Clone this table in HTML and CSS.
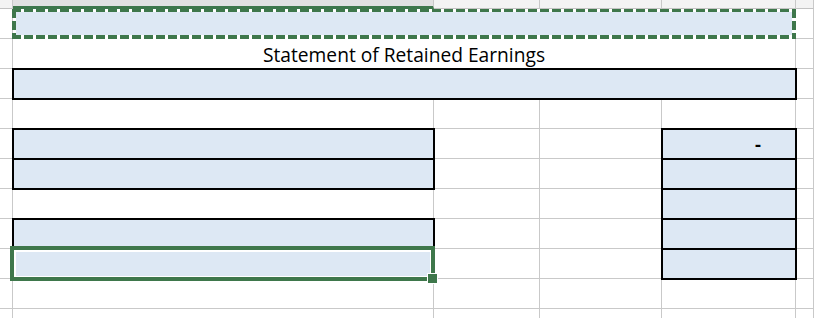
FILE: index.html
```html
<!DOCTYPE html>
<html>
<head>
<meta charset="utf-8">
<title>Statement of Retained Earnings</title>
<link rel="stylesheet" href="styles.css">
</head>
<body>
<div class="sheet">
  <!-- header row -->
  <div class="c h"></div><div class="c h sel"></div><div class="c h"></div><div class="c h"></div><div class="c h"></div><div class="c h"></div>
  <!-- row 1 -->
  <div class="c"></div><div class="marquee span4"></div><div class="c"></div>
  <!-- row 2 -->
  <div class="c"></div><div class="c span4 title">Statement of Retained Earnings</div><div class="c"></div>
  <!-- row 3 -->
  <div class="c"></div><div class="box span4"></div><div class="c"></div>
  <!-- row 4 -->
  <div class="c"></div><div class="c"></div><div class="c"></div><div class="c"></div><div class="c"></div><div class="c"></div>
  <!-- row 5 -->
  <div class="c"></div><div class="box"></div><div class="c"></div><div class="c"></div><div class="box val">-</div><div class="c"></div>
  <!-- row 6 -->
  <div class="c"></div><div class="box"></div><div class="c"></div><div class="c"></div><div class="box"></div><div class="c"></div>
  <!-- row 7 -->
  <div class="c"></div><div class="c"></div><div class="c"></div><div class="c"></div><div class="box"></div><div class="c"></div>
  <!-- row 8 -->
  <div class="c"></div><div class="box"></div><div class="c"></div><div class="c"></div><div class="box"></div><div class="c"></div>
  <!-- row 9 -->
  <div class="c"></div><div class="box active"><div class="sel-frame"><div class="handle"></div></div></div><div class="c"></div><div class="c"></div><div class="box"></div><div class="c"></div>
  <!-- row 10 -->
  <div class="c"></div><div class="c"></div><div class="c"></div><div class="c"></div><div class="c"></div><div class="c"></div>
  <!-- row 11 (cut off by the window) -->
  <div class="c end"></div><div class="c end"></div><div class="c end"></div><div class="c end"></div><div class="c end"></div><div class="c end"></div>
</div>
</body>
</html>
```
FILE: styles.css
```css
html, body {
  margin: 0;
  padding: 0;
  background: #ffffff;
  overflow: hidden;
  height: 318px;
}

.sheet {
  display: grid;
  grid-template-columns: 13px 421px 106px 122px 134px 1fr;
  grid-template-rows: 9px repeat(10, 30px) 9px;
  width: 814px;
  height: 318px;
  font-family: "Open Sans", Lato, "Liberation Sans", sans-serif;
  color: #000;
}

.c {
  box-sizing: border-box;
  border-right: 1px solid #c9c9c9;
  border-bottom: 1px solid #c9c9c9;
}

.c.end {
  border-bottom: 0;
}

.h {
  background: #f3f3f3;
  border-bottom-color: #c2c2c2;
}

.h.sel {
  background: #e1e1e1;
  border-bottom: 3px solid #3e774b;
}

.span4 {
  grid-column: span 4;
}

.marquee {
  box-sizing: border-box;
  margin-left: -1px;
  padding: 3px 4px 4px 4px;
  background:
    repeating-linear-gradient(90deg, #3e774b 0 9px, transparent 9px 12px) left top / 100% 3px no-repeat,
    repeating-linear-gradient(90deg, #3e774b 0 9px, transparent 9px 12px) left bottom / 100% 4px no-repeat,
    repeating-linear-gradient(180deg, #3e774b 0 9px, transparent 9px 12px) left top / 4px 100% no-repeat,
    repeating-linear-gradient(180deg, #3e774b 0 9px, transparent 9px 12px) right top / 4px 100% no-repeat,
    linear-gradient(#dde8f4, #dde8f4) content-box;
  z-index: 1;
}

.title {
  display: flex;
  justify-content: center;
  align-items: flex-end;
  font-size: 19.2px;
  line-height: 23px;
  padding-bottom: 2px;
}

.box {
  box-sizing: border-box;
  margin: -1px;
  border: 2px solid #000;
  background: #dde8f4;
  z-index: 1;
}

.val {
  display: flex;
  justify-content: flex-end;
  align-items: flex-end;
  font-size: 18.5px;
  font-weight: 700;
  line-height: 23px;
  padding-right: 34px;
  padding-bottom: 3px;
}

.active {
  position: relative;
  z-index: 2;
}

.sel-frame {
  position: absolute;
  left: -4px;
  top: -4px;
  right: -2px;
  bottom: -3px;
  border: 4px solid #3e774b;
  box-shadow: inset 0 0 0 1px #fff, inset 1px 1px 0 1px #fff;
}

.handle {
  position: absolute;
  right: -7px;
  bottom: -7px;
  width: 9px;
  height: 9px;
  background: #3e774b;
  border: 1px solid #fff;
}
```
